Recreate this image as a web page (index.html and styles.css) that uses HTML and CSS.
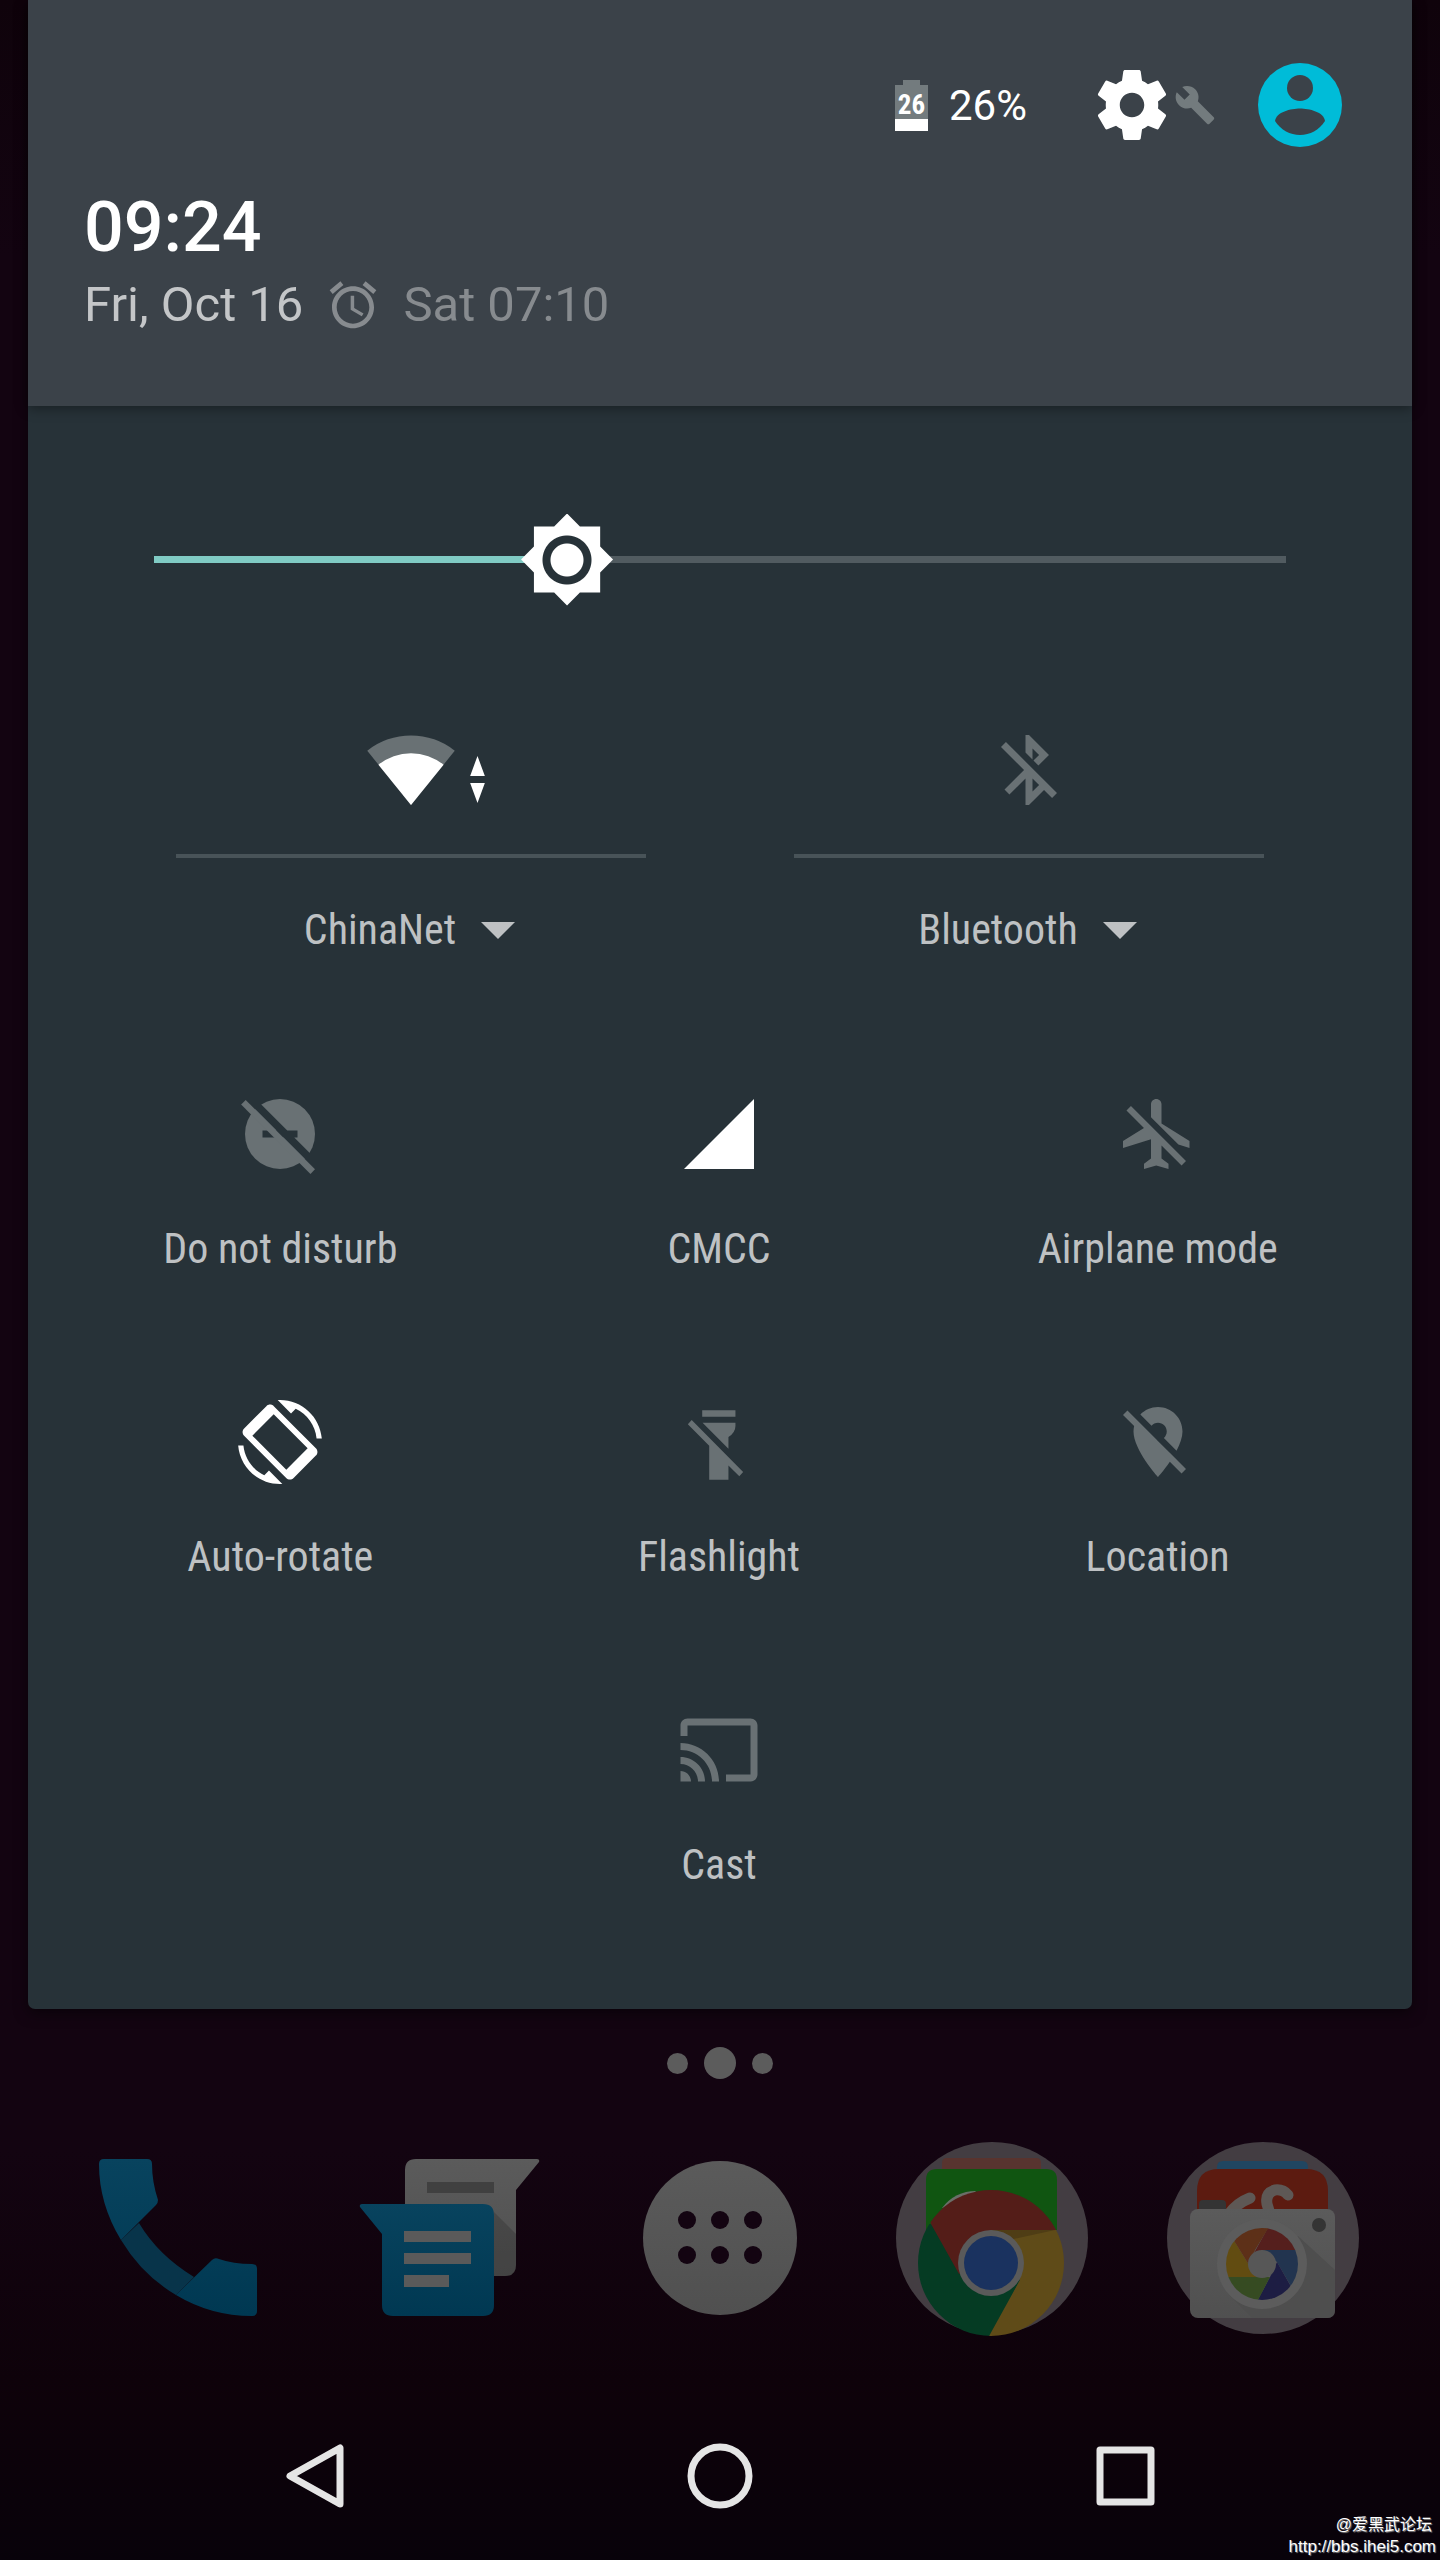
FILE: index.html
```html
<!DOCTYPE html>
<html lang="en">
<head>
  <meta charset="utf-8">
  <title>Quick Settings</title>
  <link rel="stylesheet" href="styles.css">
</head>
<body>
  <main class="panel">
    <header class="header">
      <div class="status">
        <div class="battery">
          <svg class="battery-icon" viewBox="0 0 33 51">
            <path fill="#737b7e" d="M8 0h17v5h8v34H0V5h8z"/>
            <path fill="#fff" d="M0 39h33v12H0z"/>
          </svg>
          <span class="battery-level">26</span>
        </div>
        <span class="percent">26%</span>
        <button class="settings" aria-label="Settings">
          <svg class="icon" viewBox="0 0 24 24" fill="#fff"><path d="M19.43 12.98c.04-.32.07-.64.07-.98s-.03-.66-.07-.98l2.11-1.65c.19-.15.24-.42.12-.64l-2-3.46c-.12-.22-.39-.3-.61-.22l-2.49 1c-.52-.4-1.08-.73-1.69-.98l-.38-2.65C14.46 2.18 14.25 2 14 2h-4c-.25 0-.46.18-.49.42l-.38 2.65c-.61.25-1.17.59-1.69.98l-2.49-1c-.23-.09-.49 0-.61.22l-2 3.46c-.13.22-.07.49.12.64l2.11 1.65c-.04.32-.07.65-.07.98s.03.66.07.98l-2.11 1.65c-.19.15-.24.42-.12.64l2 3.46c.12.22.39.3.61.22l2.49-1c.52.4 1.08.73 1.69.98l.38 2.65c.03.24.24.42.49.42h4c.25 0 .46-.18.49-.42l.38-2.65c.61-.25 1.17-.59 1.69-.98l2.49 1c.23.09.49 0 .61-.22l2-3.46c.12-.22.07-.49-.12-.64l-2.11-1.65zM12 15.5c-1.93 0-3.5-1.57-3.5-3.5s1.57-3.5 3.5-3.5 3.5 1.57 3.5 3.5-1.57 3.5-3.5 3.5z"/></svg>
          <svg class="wrench" viewBox="0 0 24 24" fill="#737b7e"><path d="M22.7 19l-9.1-9.1c.9-2.3.4-5-1.5-6.9-2-2-5-2.4-7.4-1.3L9 6 6 9 1.6 4.7C.4 7.1.9 10.1 2.9 12.1c1.9 1.9 4.6 2.4 6.9 1.5l9.1 9.1c.4.4 1 .4 1.4 0l2.3-2.3c.5-.4.5-1.1.1-1.4z"/></svg>
        </button>
        <button class="user" aria-label="User">
          <svg class="icon" viewBox="0 0 84 84">
            <circle cx="42" cy="42" r="42" fill="#00bcd8"/>
            <circle cx="42" cy="25" r="13" fill="#3b4249"/>
            <path fill="#3b4249" d="M17 58C18 49 33 45.500 42 45.500S66 49 67 58C61 67 52 72 42 72S23 67 17 58z"/>
          </svg>
        </button>
      </div>
      <div class="time">09:24</div>
      <div class="date-row">
        <span class="date">Fri, Oct 16</span>
        <svg class="alarm-icon" viewBox="0 0 24 24" fill="#878b8f"><path d="M22 5.720l-4.600-3.860-1.290 1.530 4.600 3.860L22 5.720zM7.880 3.390L6.600 1.860 2 5.710l1.290 1.530 4.590-3.850zM12.500 8H11v6l4.750 2.850.75-1.230-4-2.370V8zM12 4c-4.970 0-9 4.030-9 9s4.020 9 9 9c4.970 0 9-4.030 9-9s-4.030-9-9-9zm0 16c-3.870 0-7-3.130-7-7s3.130-7 7-7 7 3.130 7 7-3.130 7-7 7z"/></svg>
        <span class="alarm">Sat 07:10</span>
      </div>
    </header>

    <div class="brightness">
      <input type="range" class="slider" min="0" max="255" value="90" aria-label="Brightness">
    </div>

    <div class="dual-tiles">
      <div class="dual">
        <button class="toggle" aria-label="Wi-Fi">
          <svg class="icon on" viewBox="0 0 24 24">
            <path fill="#697174" d="M12 22L-.5 6.500A20 20 0 0 1 24.500 6.500z"/>
            <path d="M12 22L2.700 10.500A14.700 14.700 0 0 1 21.300 10.500z"/>
            <path d="M31 8l2.100 5.700h-4.200zM28.900 15.700h4.200L31 21.400z"/>
          </svg>
        </button>
        <button class="detail">ChinaNet <span class="caret"></span></button>
      </div>
      <div class="dual">
        <button class="toggle" aria-label="Toggle Bluetooth">
          <svg class="icon" viewBox="0 0 24 24"><path d="M13 5.830l1.880 1.880-1.600 1.600 1.410 1.410 3.020-3.020L12 2h-1v5.030l2 2v-3.200zM5.410 4L4 5.410 10.590 12 5 17.590 6.410 19 11 14.410V22h1l4.290-4.290 2.300 2.290L20 18.590 5.410 4zM13 18.170v-3.760l1.880 1.880L13 18.170z"/></svg>
        </button>
        <button class="detail">Bluetooth <span class="caret"></span></button>
      </div>
    </div>

    <div class="tiles">
      <button class="tile">
        <svg class="icon" viewBox="0 0 24 24">
          <mask id="dnd">
            <path fill="#fff" d="M0 0h24v24H0z"/>
            <path fill="#000" d="M7 11h10v2H7zM0 0v-3.100l24 24v3.100z"/>
          </mask>
          <circle cx="12" cy="12" r="10" mask="url(#dnd)"/>
          <path d="M2.200 2.300L.9 3.600l19.800 19.800 1.300-1.300z"/>
        </svg>
        <span>Do not disturb</span>
      </button>
      <button class="tile">
        <svg class="icon on" viewBox="0 0 24 24"><path d="M2 22h20V2z"/></svg>
        <span>CMCC</span>
      </button>
      <button class="tile">
        <svg class="icon" viewBox="0 0 24 24"><path d="M13 9V3.500c0-.83-.67-1.500-1.500-1.500S10 2.670 10 3.500v3.680l7.830 7.830L21 16v-2l-8-5zM3 5.270l4.990 4.990L2 14v2l8-2.500V19l-2 1.500V22l3.500-1 3.500 1v-1.500L13 19v-3.730L18.730 21 20 19.730 4.270 4 3 5.270z"/></svg>
        <span>Airplane mode</span>
      </button>
      <button class="tile">
        <svg class="icon on" viewBox="0 0 24 24"><path d="M16.480 2.520c3.270 1.550 5.610 4.720 5.970 8.480h1.500C23.440 4.840 18.290 0 12 0l-.66.03 3.810 3.810 1.330-1.320zm-6.250-.77c-.59-.59-1.540-.59-2.120 0L1.750 8.110c-.59.59-.59 1.540 0 2.120l12.020 12.020c.59.59 1.540.59 2.120 0l6.360-6.360c.59-.59.59-1.540 0-2.120L10.230 1.750zM13.800 19.900L4.100 10.200l6.100-6.100 9.700 9.700-6.100 6.100zM7.520 21.480C4.250 19.940 1.910 16.760 1.550 13H.05C.56 19.160 5.710 24 12 24l.66-.03-3.810-3.810-1.330 1.320z"/></svg>
        <span>Auto-rotate</span>
      </button>
      <button class="tile">
        <svg class="icon" viewBox="0 0 24 24"><path d="M7.200 2.900h9.500v1.900H7.200zM7.300 6.500h9.400v.9q0 1.800-2 3.200v3.300zM4.200 5.700L3.100 6.900l6.100 6.200v9.700h5.500v-4.100l3.100 3.100 1.100-1.200z"/></svg>
        <span>Flashlight</span>
      </button>
      <button class="tile">
        <svg class="icon" viewBox="0 0 24 24"><path d="M12 6.500c1.380 0 2.500 1.120 2.500 2.500 0 .74-.33 1.390-.83 1.850l3.630 3.630c.98-1.860 1.700-3.800 1.700-5.480 0-3.870-3.130-7-7-7-1.980 0-3.760.83-5.040 2.150l3.190 3.190c.46-.52 1.110-.84 1.850-.84zm4.370 9.600l-4.630-4.630-.11-.11L3.270 3 2 4.270l3.180 3.180C5.070 7.950 5 8.470 5 9c0 5.250 7 13 7 13s1.670-1.850 3.380-4.350L18.730 21 20 19.730l-3.630-3.630z"/></svg>
        <span>Location</span>
      </button>
      <button class="tile tile-center">
        <svg class="icon" viewBox="0 0 24 24"><path d="M21 3H3c-1.100 0-2 .9-2 2v3h2V5h18v14h-7v2h7c1.100 0 2-.9 2-2V5c0-1.100-.9-2-2-2zM1 18v3h3c0-1.660-1.340-3-3-3zm0-4v2c2.760 0 5 2.240 5 5h2c0-3.870-3.130-7-7-7zm0-4v2c4.970 0 9 4.030 9 9h2c0-6.080-4.930-11-11-11z"/></svg>
        <span>Cast</span>
      </button>
    </div>
  </main>

  <div class="pages">
    <span class="dot"></span>
    <span class="dot dot-active"></span>
    <span class="dot"></span>
  </div>

  <div class="dock">
    <button class="app" aria-label="Phone">
      <svg viewBox="0 0 192 192">
        <defs>
          <linearGradient id="blue" x1="0" y1="0" x2="0" y2="1">
            <stop offset="0" stop-color="#08435e"/>
            <stop offset="1" stop-color="#003852"/>
          </linearGradient>
          <linearGradient id="grey" x1="0" y1="0" x2="0" y2="1">
            <stop offset="0" stop-color="#5b5b5b"/>
            <stop offset="1" stop-color="#505050"/>
          </linearGradient>
        </defs>
        <path fill="#08344a" d="M39 98L57 81Q76 113 112 135L94 153Q60 133 39 98z"/>
        <path fill="url(#blue)" d="M22 17H65Q70 17 70 22Q70 40 76 58Q76 61 74 63L39 98Q17 62 17 22Q17 17 22 17zM94 153L130 118Q133 115 137 117Q151 122 170 122Q175 122 175 127V169Q175 174 170 174Q129 174 94 153z"/>
      </svg>
    </button>
    <button class="app" aria-label="Messenger">
      <svg viewBox="0 0 192 192">
        <path fill="url(#grey)" d="M63 17H184Q187 17 186 20L163 48V123Q163 134 152 134H52V28Q52 17 63 17z"/>
        <path fill="#404040" d="M74 40h67v11H74z"/>
        <path fill="#000" opacity=".16" d="M141 70L163 92V123Q163 134 152 134H141z"/>
        <path fill="url(#blue)" d="M9 62H130Q141 62 141 73V163Q141 174 130 174H40Q29 174 29 163V92L7 65Q6 62 9 62z"/>
        <path fill="#5a5a5a" d="M51 89h67v11H51zM51 111h67v11H51zM51 133h45v12H51z"/>
      </svg>
    </button>
    <button class="app" aria-label="Apps">
      <svg viewBox="0 0 192 192">
        <circle cx="96" cy="96" r="77" fill="url(#grey)"/>
        <g fill="#130411">
          <circle cx="63" cy="78" r="9"/><circle cx="96" cy="78" r="9"/><circle cx="129" cy="78" r="9"/>
          <circle cx="63" cy="113" r="9"/><circle cx="96" cy="113" r="9"/><circle cx="129" cy="113" r="9"/>
        </g>
      </svg>
    </button>
    <button class="app" aria-label="Browser folder">
      <svg viewBox="0 0 192 192">
        <clipPath id="chrome"><circle cx="95" cy="121" r="73"/></clipPath>
        <circle cx="96" cy="96" r="96" fill="#433d42"/>
        <path fill="#58342f" d="M46 28V21q0-5 5-5h89q5 0 5 5v7z"/>
        <path fill="#105511" d="M30 88V38q0-11 11-11h109q11 0 11 11v50z"/>
        <path fill="#6a6f68" d="M46 66Q59 49 80 49L72 60z"/>
        <g clip-path="url(#chrome)">
          <path fill="#053b23" d="M20 82h15l89 56-31 60H20z"/>
          <path fill="#5f4b18" d="M95 88h80v108H92l32-58z"/>
          <path fill="#541d18" d="M35 82L63 132 95 121 95 88H175V40H20z"/>
          <path fill="#4f3d15" d="M95 88h64l-46 10z"/>
        </g>
        <circle cx="95" cy="121" r="33" fill="#5a5a5a"/>
        <circle cx="95" cy="121" r="27" fill="#1a325f"/>
      </svg>
    </button>
    <button class="app" aria-label="Camera folder">
      <svg viewBox="0 0 192 192">
        <clipPath id="lens"><circle cx="95" cy="122" r="36"/></clipPath>
        <circle cx="96" cy="96" r="96" fill="#433d42"/>
        <path fill="#204661" d="M50 28v-3q0-6 6-6h79q6 0 6 6v3z"/>
        <path fill="#5c1b10" d="M30 70V49q0-22 22-22h87q22 0 22 22v21z"/>
        <path fill="none" stroke="#5e5855" stroke-width="11" stroke-linecap="round" d="M62 72Q70 61 83 56M121 53Q116 47 108 48Q98 51 100 62L103 72"/>
        <path fill="#343434" d="M32 70v-8q0-4 4-4h19q4 0 4 4v8z"/>
        <rect x="23" y="67" width="145" height="109" rx="8" fill="url(#grey)"/>
        <path fill="#4e4e4e" d="M131 94L168 128V168Q168 176 160 176H85L62 153z"/>
        <circle cx="152" cy="83" r="7" fill="#343434"/>
        <circle cx="95" cy="122" r="45" fill="#5c5c5c"/>
        <g clip-path="url(#lens)">
          <path fill="#551f1d" d="M102 84H135V108H95L82 120z"/>
          <path fill="#22344f" d="M95 108H135V146H125L110 120z"/>
          <path fill="#1d1d43" d="M110 120L126 148V165H87L103 135z"/>
          <path fill="#364b22" d="M103 135L90 160H55V135z"/>
          <path fill="#624c11" d="M96 135H55V95L66 97L82 123z"/>
          <path fill="#5d3018" d="M82 123L66 97V80H105L88 108z"/>
        </g>
        <circle cx="95" cy="122" r="14" fill="#575757"/>
      </svg>
    </button>
  </div>

  <nav class="navbar">
    <button class="nav-button" aria-label="Back">
      <svg viewBox="0 0 84 84"><path d="M67 14V70L17 42z"/></svg>
    </button>
    <button class="nav-button" aria-label="Home">
      <svg viewBox="0 0 84 84"><circle cx="42" cy="42" r="29"/></svg>
    </button>
    <button class="nav-button" aria-label="Recent apps">
      <svg viewBox="0 0 84 84"><rect x="17" y="16" width="51" height="52"/></svg>
    </button>
  </nav>

  <div class="watermark">
    <div class="forum">@爱黑武论坛</div>
    <div>http://bbs.ihei5.com</div>
  </div>
</body>
</html>
```

FILE: styles.css
```css
* {
  box-sizing: border-box;
}
body {
  margin: 0;
  min-height: 100vh;
  display: flex;
  flex-direction: column;
  position: relative;
  background: linear-gradient(#0f030b, #130411 10%, #130411 84%, #0e020a 93%, #08020a);
  font-family: Roboto, sans-serif;
  color: #bec1c3;
}
button {
  padding: 0;
  border: none;
  background: none;
  color: inherit;
  font: inherit;
  cursor: pointer;
}
svg {
  display: block;
  overflow: visible;
}
.icon {
  width: 84px;
  height: 84px;
  fill: #697174;
}
.icon.on,
.settings .icon {
  fill: #fff;
}

.panel {
  margin: 0 28px;
  padding-bottom: 119px;
  background: #273238;
  border-radius: 0 0 7px 7px;
  box-shadow: 0 4px 14px rgba(0, 0, 0, 0.5);
}

/* header */
.header {
  padding: 63px 70px 72px 56px;
  background: #3b4249;
  box-shadow: 0 2px 12px rgba(0, 0, 0, 0.4);
}
.status {
  display: flex;
  justify-content: flex-end;
  align-items: center;
}
.battery {
  position: relative;
  margin-right: 21px;
}
.battery-icon {
  width: 33px;
  height: 51px;
}
.battery-level {
  position: absolute;
  top: 11px;
  left: 0;
  width: 100%;
  text-align: center;
  font-family: "Roboto Condensed", Roboto, sans-serif;
  font-size: 27px;
  line-height: 28px;
  font-weight: bold;
  color: #fff;
}
.percent {
  margin-right: 63px;
  padding-top: 2px;
  font-size: 42px;
  line-height: 50px;
  color: #fff;
}
.settings {
  display: flex;
  align-items: center;
  margin-right: 42px;
}
.wrench {
  width: 42px;
  height: 42px;
}
.time {
  margin-top: 39px;
  font-size: 70px;
  line-height: 82px;
  font-weight: 500;
  color: #fff;
}
.date-row {
  display: flex;
  align-items: center;
  gap: 22px;
  margin-top: 8px;
  font-size: 49px;
  line-height: 58px;
}
.date {
  color: #c4c6c8;
}
.alarm {
  color: #878b8f;
}
.alarm-icon {
  width: 56px;
  height: 56px;
}

/* brightness */
.brightness {
  padding: 107px 126px 123px;
}
.slider {
  -webkit-appearance: none;
  appearance: none;
  display: block;
  width: 100%;
  height: 92px;
  margin: 0;
  background: none;
}
.slider::-webkit-slider-runnable-track {
  height: 7px;
  background: linear-gradient(to right, #80cbc4 36%, #515b60 36%);
}
.slider::-webkit-slider-thumb {
  -webkit-appearance: none;
  width: 92px;
  height: 92px;
  margin-top: -42px;
  background: radial-gradient(circle, #fff 16px, #273238 17px, #273238 24px, #fff 25px);
  clip-path: polygon(50% 0, 64% 14%, 86% 14%, 86% 36%, 100% 50%, 86% 64%, 86% 86%, 64% 86%, 50% 100%, 36% 86%, 14% 86%, 14% 64%, 0 50%, 14% 36%, 14% 14%, 36% 14%);
}

/* tiles */
.dual-tiles {
  display: grid;
  grid-template-columns: 1fr 1fr;
  gap: 148px;
  padding: 0 148px;
}
.dual {
  display: flex;
  flex-direction: column;
}
.toggle {
  display: flex;
  justify-content: center;
  padding-bottom: 42px;
  border-bottom: 4px solid #485358;
}
.detail,
.tile {
  font-family: "Roboto Condensed", Roboto, sans-serif;
  font-size: 42px;
  line-height: 50px;
}
.detail {
  display: flex;
  justify-content: center;
  align-items: center;
  gap: 25px;
  margin-top: 47px;
  padding-right: 3px;
}
.caret {
  border: 17px solid transparent;
  border-top-color: #bec1c3;
  border-bottom: none;
}
.tiles {
  display: grid;
  grid-template-columns: repeat(3, 1fr);
  row-gap: 126px;
  margin-top: 137px;
  padding: 0 35px 0 33px;
}
.tile {
  display: flex;
  flex-direction: column;
  align-items: center;
  gap: 48px;
}
.tile-center {
  grid-column: 2;
}

/* launcher */
.pages {
  display: flex;
  justify-content: center;
  align-items: center;
  gap: 16px;
  height: 32px;
  margin-top: 38px;
}
.dot {
  width: 21px;
  height: 21px;
  border-radius: 50%;
  background: #5c5c5c;
}
.dot-active {
  width: 32px;
  height: 32px;
}
.dock {
  display: grid;
  grid-template-columns: repeat(5, 1fr);
  justify-items: center;
  margin-top: 63px;
  padding: 0 41px 0 42px;
}
.app svg {
  width: 192px;
  height: 192px;
}
.navbar {
  display: flex;
  justify-content: space-between;
  align-items: center;
  height: 168px;
  margin-top: auto;
  padding: 0 273px;
}
.nav-button svg {
  width: 84px;
  height: 84px;
  fill: none;
  stroke: #e5e5e5;
  stroke-width: 7px;
  stroke-linejoin: round;
}
.watermark {
  position: absolute;
  right: 4px;
  bottom: 2px;
  text-align: right;
  font-family: "Liberation Sans", "Noto Sans CJK SC", sans-serif;
  font-size: 17px;
  line-height: 22px;
  color: #fff;
  text-shadow: 1px 1px 1px #888;
}
.forum {
  padding-right: 4px;
  font-size: 16px;
}
```
